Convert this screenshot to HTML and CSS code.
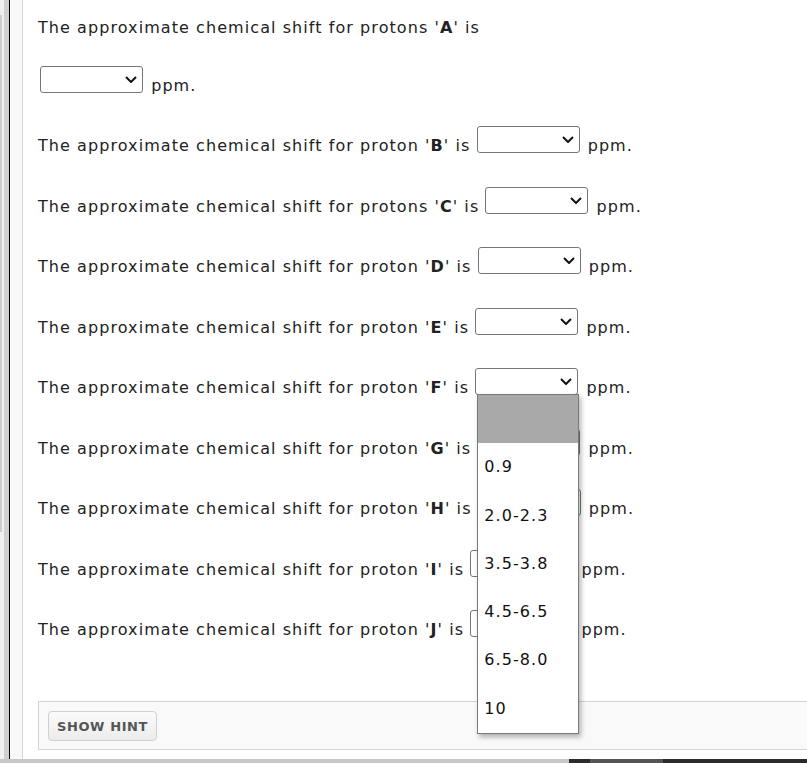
FILE: index.html
```html
<!DOCTYPE html>
<html lang="en">
<head>
    <meta charset="UTF-8">
    <meta name="viewport" content="width=device-width, initial-scale=1.0">
    <title>Chemical Shift Question</title>
    <link rel="stylesheet" href="styles.css">
</head>
<body>

<div class="window">
    <div class="scroll-track"><div class="scroll-thumb"></div></div>
    <div class="rail"></div>
    <div class="edge"></div>
    <div class="margin"></div>

    <main class="content">
        <div class="questions">
            <div class="row row-first">The approximate chemical shift for protons '<b>A</b>' is</div>
            <div class="row row-indent"><span class="picker"><select class="shift"><option></option></select><svg class="chevron" viewBox="0 0 12 7"><path d="M1 1 L6 6 L11 1"/></svg></span> ppm.</div>
            <div class="row">The approximate chemical shift for proton '<b>B</b>' is <span class="picker"><select class="shift"><option></option></select><svg class="chevron" viewBox="0 0 12 7"><path d="M1 1 L6 6 L11 1"/></svg></span> ppm.</div>
            <div class="row">The approximate chemical shift for protons '<b>C</b>' is <span class="picker"><select class="shift"><option></option></select><svg class="chevron" viewBox="0 0 12 7"><path d="M1 1 L6 6 L11 1"/></svg></span> ppm.</div>
            <div class="row">The approximate chemical shift for proton '<b>D</b>' is <span class="picker"><select class="shift"><option></option></select><svg class="chevron" viewBox="0 0 12 7"><path d="M1 1 L6 6 L11 1"/></svg></span> ppm.</div>
            <div class="row">The approximate chemical shift for proton '<b>E</b>' is <span class="picker"><select class="shift"><option></option></select><svg class="chevron" viewBox="0 0 12 7"><path d="M1 1 L6 6 L11 1"/></svg></span> ppm.</div>
            <div class="row">The approximate chemical shift for proton '<b>F</b>' is <span class="picker"><select class="shift"><option></option></select><svg class="chevron" viewBox="0 0 12 7"><path d="M1 1 L6 6 L11 1"/></svg>
                <ul class="dropdown">
                    <li class="selected">&nbsp;</li>
                    <li>0.9</li>
                    <li>2.0-2.3</li>
                    <li>3.5-3.8</li>
                    <li>4.5-6.5</li>
                    <li>6.5-8.0</li>
                    <li>10</li>
                </ul></span> ppm.</div>
            <div class="row">The approximate chemical shift for proton '<b>G</b>' is <span class="picker"><select class="shift"><option></option></select><svg class="chevron" viewBox="0 0 12 7"><path d="M1 1 L6 6 L11 1"/></svg></span> ppm.</div>
            <div class="row">The approximate chemical shift for proton '<b>H</b>' is <span class="picker"><select class="shift"><option></option></select><svg class="chevron" viewBox="0 0 12 7"><path d="M1 1 L6 6 L11 1"/></svg></span> ppm.</div>
            <div class="row">The approximate chemical shift for proton '<b>I</b>' is <span class="picker"><select class="shift"><option></option></select><svg class="chevron" viewBox="0 0 12 7"><path d="M1 1 L6 6 L11 1"/></svg></span> ppm.</div>
            <div class="row">The approximate chemical shift for proton '<b>J</b>' is <span class="picker"><select class="shift"><option></option></select><svg class="chevron" viewBox="0 0 12 7"><path d="M1 1 L6 6 L11 1"/></svg></span> ppm.</div>
        </div>

        <div class="hint-box">
            <button class="hint-button">SHOW HINT</button>
        </div>
    </main>
</div>
<div class="statusbar"><div class="statusbar-dark"><div class="statusbar-seg"></div></div></div>

</body>
</html>
```

FILE: styles.css
```css
body {
    margin: 0;
    font-family: "DejaVu Sans", Verdana, sans-serif;
    font-size: 16px;
    letter-spacing: 1.07px;
    color: #222;
    background: #fff;
    overflow: hidden;
}
.window {
    display: flex;
    height: 759px;
}
.scroll-track {
    width: 4px;
    background: #f0f0f0;
    padding-top: 15px;
    box-sizing: border-box;
}
.scroll-thumb {
    width: 2px;
    height: 517px;
    background: #cdcdcd;
}
.rail {
    width: 5px;
    background: #d0d0d0;
}
.edge {
    width: 1px;
    background: #000;
}
.margin {
    width: 12px;
    background: #f9f9f9;
    border-right: 1px solid #d4d4d4;
}
.content {
    flex: 1;
    padding: 13px 0 0 15px;
    display: flex;
    flex-direction: column;
}
.questions {
    display: flex;
    flex-direction: column;
    gap: 30.5px;
}
.row {
    height: 30px;
    line-height: 30px;
    white-space: nowrap;
}
.row-first {
    margin-bottom: -3px;
}
.row-indent {
    padding-left: 2px;
}
.picker {
    position: relative;
    top: -7px;
    display: inline-block;
    height: 27px;
    margin: 0 2px 0 0;
    vertical-align: middle;
    line-height: normal;
}
.shift {
    display: block;
    width: 103px;
    height: 27px;
    margin: 0;
    -webkit-appearance: none;
    appearance: none;
    background: #fff;
    border: 1px solid #767676;
    border-radius: 3px;
}
.chevron {
    position: absolute;
    right: 6px;
    top: 10px;
    width: 12px;
    height: 7px;
    pointer-events: none;
}
.chevron path {
    fill: none;
    stroke: #111;
    stroke-width: 2;
}
.dropdown {
    position: absolute;
    left: 2px;
    top: 26px;
    z-index: 5;
    width: 100px;
    margin: 0;
    padding: 0;
    list-style: none;
    background: #fff;
    border: 1px solid #7a7a7a;
    box-shadow: 2px 3px 5px rgba(0, 0, 0, 0.3);
    font-size: 16px;
    line-height: 48.3px;
}
.dropdown li {
    height: 48.3px;
    padding-left: 6px;
    color: #111;
}
.dropdown .selected {
    background: #a9a9a9;
}
.hint-box {
    margin-top: 56px;
    padding: 9px 10px 8px 9px;
    background: #f9f9f9;
    border-top: 1px solid #d4d4d4;
    border-bottom: 1px solid #d4d4d4;
    border-left: 1px solid #d4d4d4;
}
.hint-button {
    height: 30px;
    padding: 0 8px;
    font-family: "DejaVu Sans", Verdana, sans-serif;
    font-size: 13px;
    font-weight: bold;
    letter-spacing: 0.6px;
    color: #555;
    background: linear-gradient(#fbfbfb, #ececec);
    border: 1px solid #d0d0d0;
    border-radius: 4px;
}
.statusbar {
    height: 4px;
    background: #c8c8c8;
    display: flex;
    justify-content: flex-end;
}
.statusbar-dark {
    width: 217px;
    background: #2b2b2b;
    padding-left: 21px;
}
.statusbar-seg {
    width: 73px;
    height: 100%;
    background: #555;
}
```
